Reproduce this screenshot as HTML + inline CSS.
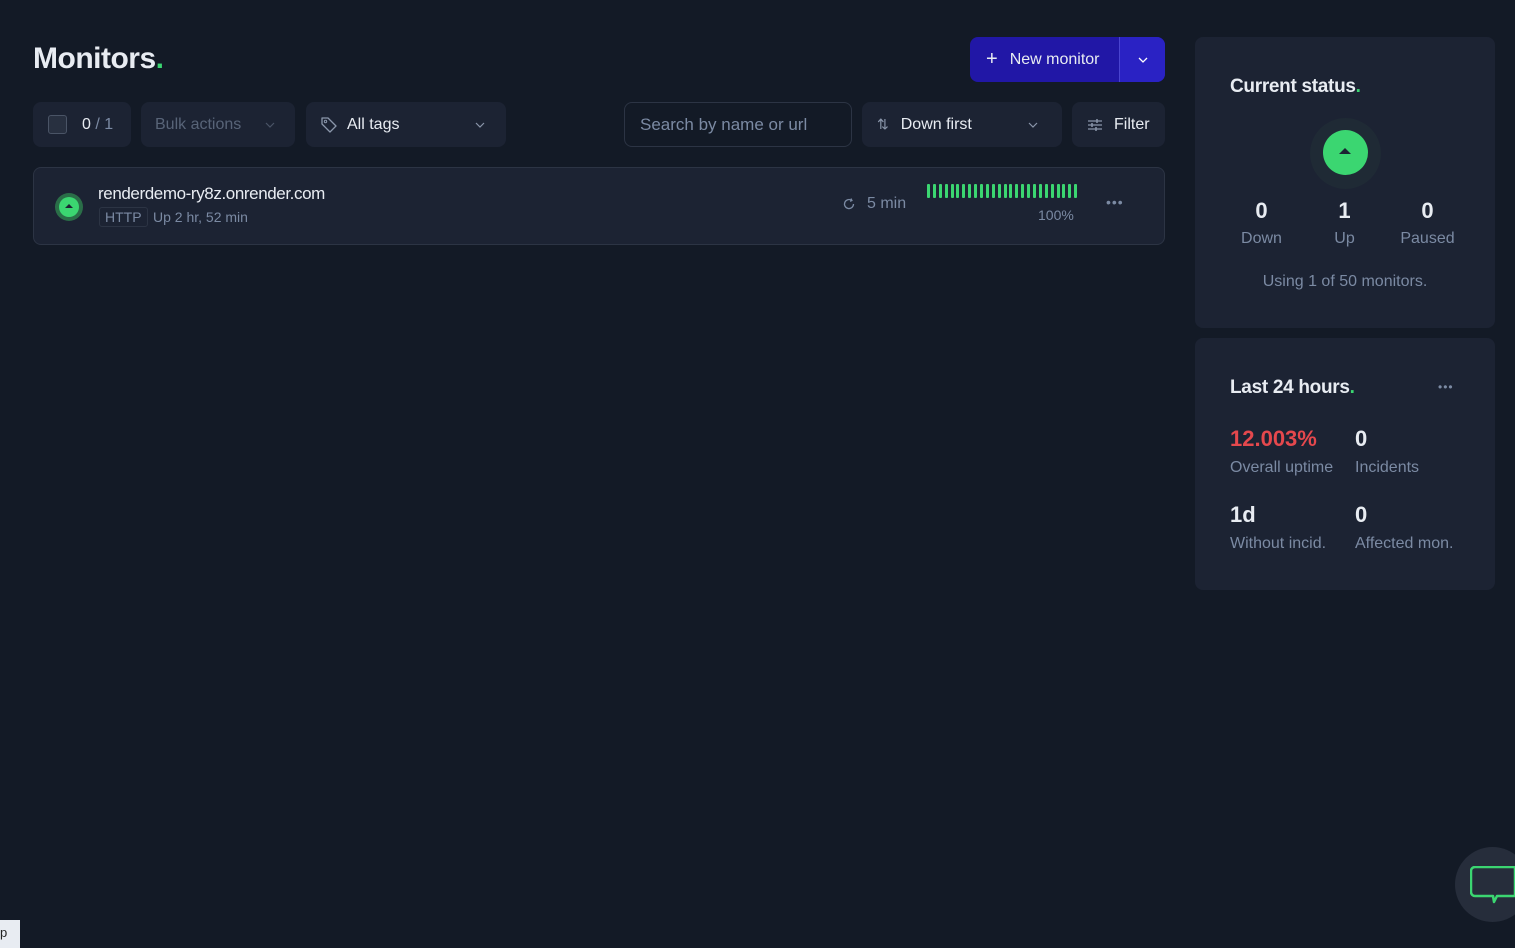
<!DOCTYPE html>
<html><head><meta charset="utf-8"><style>
*{box-sizing:border-box;margin:0;padding:0}
body{width:1515px;height:948px;background:#131a26;font-family:"Liberation Sans",sans-serif;color:#e8ecf2;position:relative;overflow:hidden}
.abs{position:absolute}
.card{background:#1c2333;border-radius:8px}
.g{color:#3bd671}
.muted{color:#7b8aa3}
.btn{position:absolute;background:#1c2333;border-radius:8px;height:45px;top:102px;display:flex;align-items:center;font-size:16px}
.bars i{width:3px;height:14px;background:#3bd671;border-radius:1px;display:block}
</style></head><body>
<div class="abs" style="left:33px;top:42px;font-size:30px;font-weight:bold;letter-spacing:-0.5px">Monitors<span class="g">.</span></div>

<div class="abs" style="left:970px;top:37px;width:195px;height:45px;background:#2117a6;border-radius:8px;display:flex;align-items:center;font-size:16px">
<span style="margin-left:16px;font-size:20px;font-weight:300">+</span><span style="margin-left:12px">New monitor</span>
<div style="position:absolute;right:0;top:0;width:46px;height:45px;background:#2a22c4;border-radius:0 8px 8px 0;border-left:1px solid #4a44d0;display:flex;align-items:center;justify-content:center"><svg width="10" height="6"><path d="M1 1l4 4 4-4" stroke="#fff" fill="none" stroke-width="1.3"/></svg></div>
</div>

<div class="btn" style="left:33px;width:98px"><div style="margin-left:15px;width:19px;height:19px;border:1px solid #4a5466;border-radius:3px;background:#283040"></div><span style="margin-left:15px">0 <span class="muted">/ 1</span></span></div>
<div class="btn" style="left:141px;width:154px;color:#586478"><span style="margin-left:14px">Bulk actions</span><svg style="margin-left:24px" width="10" height="6"><path d="M1 1l4 4 4-4" stroke="#4a5466" fill="none" stroke-width="1.2"/></svg></div>
<div class="btn" style="left:306px;width:200px"><svg style="margin-left:14px" width="18" height="18" viewBox="0 0 18 18"><path d="M2 2h6l8 8-6 6-8-8z" stroke="#8a96aa" fill="none" stroke-width="1.3" stroke-linejoin="round"/><circle cx="5.5" cy="5.5" r="1.2" stroke="#8a96aa" fill="none"/></svg><span style="margin-left:9px">All tags</span><svg style="margin-left:76px" width="10" height="6"><path d="M1 1l4 4 4-4" stroke="#8a96aa" fill="none" stroke-width="1.2"/></svg></div>

<div class="abs" style="left:624px;top:102px;width:228px;height:45px;border:1px solid #2c3444;border-radius:8px;font-size:17px;color:#7b8aa3;padding:12px 0 0 15px">Search by name or url</div>
<div class="btn" style="left:862px;width:200px"><span style="margin-left:15px;color:#8a96aa;font-size:14px">⇅</span><span style="margin-left:12px">Down first</span><svg style="margin-left:56px" width="10" height="6"><path d="M1 1l4 4 4-4" stroke="#8a96aa" fill="none" stroke-width="1.2"/></svg></div>
<div class="btn" style="left:1072px;width:93px"><svg style="margin-left:15px" width="16" height="14"><path d="M1 3h14M1 7h14M1 11h14" stroke="#8a96aa" stroke-width="1.2"/><path d="M10 1v4M5 5v4M9 9v4" stroke="#8a96aa" stroke-width="1.5"/></svg><span style="margin-left:11px">Filter</span></div>

<div class="abs card" style="left:33px;top:167px;width:1132px;height:78px;border:1px solid #2c3444">
<div class="abs" style="left:21px;top:25px;width:28px;height:28px;border-radius:50%;background:#2a6e48"></div>
<div class="abs" style="left:25px;top:29px;width:20px;height:20px;border-radius:50%;background:#3bd671"></div>
<div class="abs" style="left:31px;top:36px;width:0;height:0;border-left:4px solid transparent;border-right:4px solid transparent;border-bottom:4px solid #1c2333"></div>
<div class="abs" style="left:64px;top:16px;font-size:17px;letter-spacing:-0.4px">renderdemo-ry8z.onrender.com</div>
<div class="abs" style="left:65px;top:39px;border:1px solid #2c3444;border-radius:3px;padding:1px 5px;font-size:14px;color:#7b8aa3">HTTP</div>
<div class="abs muted" style="left:119px;top:41px;font-size:14px">Up 2 hr, 52 min</div>
<svg class="abs" style="left:808px;top:29px" width="14" height="14" viewBox="0 0 14 14"><path d="M11.5 7a4.5 4.5 0 1 1-2-3.7" stroke="#7b8aa3" fill="none" stroke-width="1.3"/><path d="M9 1.5l1 2-2 .8" stroke="#7b8aa3" fill="none" stroke-width="1.2"/></svg>
<div class="abs muted" style="left:833px;top:27px;font-size:16px">5 min</div>
<div class="abs bars" style="left:893px;top:16px;display:flex;gap:2.9px">
<i></i><i></i><i></i><i></i><i></i><i></i><i></i><i></i><i></i><i></i><i></i><i></i><i></i><i></i><i></i><i></i><i></i><i></i><i></i><i></i><i></i><i></i><i></i><i></i><i></i><i></i>
</div>
<div class="abs muted" style="left:1004px;top:39px;font-size:14px">100%</div>
<div class="abs muted" style="left:1072px;top:26px;font-size:14px;letter-spacing:1px">•••</div>
</div>

<div class="abs card" style="left:1195px;top:37px;width:300px;height:291px">
<div class="abs" style="left:35px;top:39px;font-size:19px;font-weight:bold;letter-spacing:-0.3px">Current status<span class="g">.</span></div>
<div class="abs" style="left:115px;top:81px;width:71px;height:71px;border-radius:50%;background:#1f2a35"></div>
<div class="abs" style="left:128px;top:93px;width:45px;height:45px;border-radius:50%;background:#3bd671"></div>
<div class="abs" style="left:144px;top:111px;width:0;height:0;border-left:6px solid transparent;border-right:6px solid transparent;border-bottom:6px solid #1c2333"></div>
<div class="abs" style="left:0;top:161px;width:300px;display:flex;font-size:22px;font-weight:bold">
<div style="position:absolute;left:38px;width:57px;text-align:center">0</div><div style="position:absolute;left:121px;width:57px;text-align:center">1</div><div style="position:absolute;left:204px;width:57px;text-align:center">0</div></div>
<div class="abs muted" style="left:0;top:193px;width:300px;font-size:16px">
<div style="position:absolute;left:28px;width:77px;text-align:center">Down</div><div style="position:absolute;left:111px;width:77px;text-align:center">Up</div><div style="position:absolute;left:194px;width:77px;text-align:center">Paused</div></div>
<div class="abs muted" style="left:0;top:236px;width:300px;text-align:center;font-size:16px">Using 1 of 50 monitors.</div>
</div>

<div class="abs card" style="left:1195px;top:338px;width:300px;height:252px">
<div class="abs" style="left:35px;top:39px;font-size:19px;font-weight:bold;letter-spacing:-0.3px">Last 24 hours<span class="g">.</span></div>
<div class="abs muted" style="left:243px;top:42px;font-size:12px;letter-spacing:1px">•••</div>
<div class="abs" style="left:35px;top:88px;font-size:22px;font-weight:bold;color:#e5484d">12.003%</div>
<div class="abs" style="left:160px;top:88px;font-size:22px;font-weight:bold">0</div>
<div class="abs muted" style="left:35px;top:121px;font-size:16px">Overall uptime</div>
<div class="abs muted" style="left:160px;top:121px;font-size:16px">Incidents</div>
<div class="abs" style="left:35px;top:164px;font-size:22px;font-weight:bold">1d</div>
<div class="abs" style="left:160px;top:164px;font-size:22px;font-weight:bold">0</div>
<div class="abs muted" style="left:35px;top:197px;font-size:16px">Without incid.</div>
<div class="abs muted" style="left:160px;top:197px;font-size:16px">Affected mon.</div>
</div>

<div class="abs" style="left:1455px;top:847px;width:75px;height:75px;border-radius:50%;background:#262d3b"></div>
<svg class="abs" style="left:1470px;top:866px" width="45" height="40" viewBox="0 0 45 40"><path d="M5 1h40v29H27l-3 6-1-6H5a4 4 0 0 1-4-4V5a4 4 0 0 1 4-4z" stroke="#3bd671" stroke-width="2.5" fill="none" stroke-linejoin="round"/></svg>
<div class="abs" style="left:0;top:920px;width:20px;height:28px;background:#e8ecf2;color:#222;font-size:13px;padding:5px 0 0 0">p</div>
</body></html>
